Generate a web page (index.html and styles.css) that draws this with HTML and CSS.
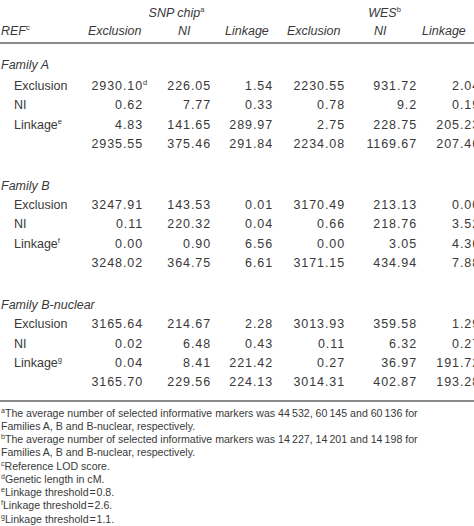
FILE: index.html
```html
<!DOCTYPE html>
<html lang="en">
<head>
<meta charset="utf-8">
<title>LOD scores</title>
<link rel="stylesheet" href="styles.css">
</head>
<body>
<div class="page">
  <table class="data">
    <colgroup>
      <col class="c-label">
      <col class="c1"><col class="c2"><col class="c3">
      <col class="c4"><col class="c5"><col class="c6">
    </colgroup>
    <thead>
      <tr class="spanner">
        <th></th>
        <th colspan="3" class="grp">SNP chip<sup>a</sup></th>
        <th colspan="3" class="grp wes">WES<sup>b</sup></th>
      </tr>
      <tr class="heads">
        <th class="ref">REF<sup>c</sup></th>
        <th class="h1">Exclusion</th>
        <th class="h2">NI</th>
        <th class="h3">Linkage</th>
        <th class="h4">Exclusion</th>
        <th class="h5">NI</th>
        <th class="h6">Linkage</th>
      </tr>
    </thead>
    <tbody class="group first">
      <tr class="famrow"><td colspan="7">Family A</td></tr>
      <tr><td class="lab">Exclusion</td><td>2930.10<span class="fn">d</span></td><td>226.05</td><td>1.54</td><td>2230.55</td><td>931.72</td><td>2.04</td></tr>
      <tr><td class="lab">NI</td><td>0.62</td><td>7.77</td><td>0.33</td><td>0.78</td><td>9.2</td><td>0.19</td></tr>
      <tr><td class="lab">Linkage<sup>e</sup></td><td>4.83</td><td>141.65</td><td>289.97</td><td>2.75</td><td>228.75</td><td>205.23</td></tr>
      <tr><td class="lab"></td><td>2935.55</td><td>375.46</td><td>291.84</td><td>2234.08</td><td>1169.67</td><td>207.46</td></tr>
    </tbody>
    <tbody class="group">
      <tr class="famrow"><td colspan="7">Family B</td></tr>
      <tr><td class="lab">Exclusion</td><td>3247.91</td><td>143.53</td><td>0.01</td><td>3170.49</td><td>213.13</td><td>0.00</td></tr>
      <tr><td class="lab">NI</td><td>0.11</td><td>220.32</td><td>0.04</td><td>0.66</td><td>218.76</td><td>3.52</td></tr>
      <tr><td class="lab">Linkage<sup>f</sup></td><td>0.00</td><td>0.90</td><td>6.56</td><td>0.00</td><td>3.05</td><td>4.36</td></tr>
      <tr><td class="lab"></td><td>3248.02</td><td>364.75</td><td>6.61</td><td>3171.15</td><td>434.94</td><td>7.88</td></tr>
    </tbody>
    <tbody class="group last">
      <tr class="famrow"><td colspan="7">Family B-nuclear</td></tr>
      <tr><td class="lab">Exclusion</td><td>3165.64</td><td>214.67</td><td>2.28</td><td>3013.93</td><td>359.58</td><td>1.29</td></tr>
      <tr><td class="lab">NI</td><td>0.02</td><td>6.48</td><td>0.43</td><td>0.11</td><td>6.32</td><td>0.27</td></tr>
      <tr><td class="lab">Linkage<sup>g</sup></td><td>0.04</td><td>8.41</td><td>221.42</td><td>0.27</td><td>36.97</td><td>191.72</td></tr>
      <tr class="total"><td class="lab"></td><td>3165.70</td><td>229.56</td><td>224.13</td><td>3014.31</td><td>402.87</td><td>193.28</td></tr>
    </tbody>
  </table>
  <div class="notes">
    <p><sup>a</sup>The average number of selected informative markers was 44&#8201;532, 60&#8201;145 and 60&#8201;136 for<br>Families A, B and B-nuclear, respectively.</p>
    <p><sup>b</sup>The average number of selected informative markers was 14&#8201;227, 14&#8201;201 and 14&#8201;198 for<br>Families A, B and B-nuclear, respectively.</p>
    <p><sup>c</sup>Reference LOD score.</p>
    <p><sup>d</sup>Genetic length in cM.</p>
    <p><sup>e</sup>Linkage threshold&#8202;=&#8202;0.8.</p>
    <p><sup>f</sup>Linkage threshold&#8202;=&#8202;2.6.</p>
    <p><sup>g</sup>Linkage threshold&#8202;=&#8202;1.1.</p>
  </div>
</div>
</body>
</html>
```
FILE: styles.css
```css
html, body {
  margin: 0;
  padding: 0;
  background: #ffffff;
}

body {
  font-family: "Liberation Sans", Arial, sans-serif;
  color: #393939;
}

.page {
  width: 474px;
  height: 526px;
  overflow: hidden;
}

.data {
  border-collapse: separate;
  border-spacing: 0;
  table-layout: fixed;
  width: 480px;
  font-size: 12.5px;
  border-bottom: 2px solid #8a8a8a;
}

.c-label { width: 80px; }
.c1 { width: 63px; }
.c2 { width: 68px; }
.c3 { width: 62px; }
.c4 { width: 72px; }
.c5 { width: 72px; }
.c6 { width: 63px; }

.data th,
.data td {
  padding: 0;
  font-weight: normal;
  white-space: nowrap;
}

.data sup {
  font-size: 7.5px;
  line-height: 0;
  vertical-align: 5px;
  font-style: normal;
}

thead th {
  font-style: italic;
  line-height: 18px;
}

.spanner th {
  padding-top: 4px;
  text-align: center;
}

.spanner .wes {
  padding-left: 16px;
}

.heads th {
  padding-bottom: 2px;
  border-bottom: 2px solid #8a8a8a;
  text-align: left;
}

.heads .ref { padding-left: 1px; }
.heads .h1 { padding-left: 8px; }
.heads .h2 { padding-left: 35px; }
.heads .h3 { padding-left: 14px; }
.heads .h4 { padding-left: 14px; }
.heads .h5 { padding-left: 29px; }
.heads .h6 { padding-left: 5px; }

tbody td {
  line-height: 19.3px;
  text-align: right;
  padding-right: 6px;
  letter-spacing: 0.9px;
}

tbody td.lab {
  text-align: left;
  padding-left: 14px;
  padding-right: 0;
  letter-spacing: 0;
}

.famrow td {
  text-align: left;
  font-style: italic;
  letter-spacing: 0;
  line-height: 18px;
  padding: 23px 0 1px 1px;
}

.first .famrow td {
  padding-top: 12px;
  padding-bottom: 3px;
}

.total td {
  padding-bottom: 7px;
}

.fn {
  display: inline-block;
  width: 0;
  font-size: 7.5px;
  line-height: 0;
  vertical-align: 5px;
  letter-spacing: 0;
}

.notes {
  margin-top: 5px;
  font-size: 10.6px;
  line-height: 13.25px;
}

.notes p {
  margin: 0;
  padding-left: 1px;
}

.notes sup {
  font-size: 7px;
  line-height: 0;
  vertical-align: 4px;
}
```
